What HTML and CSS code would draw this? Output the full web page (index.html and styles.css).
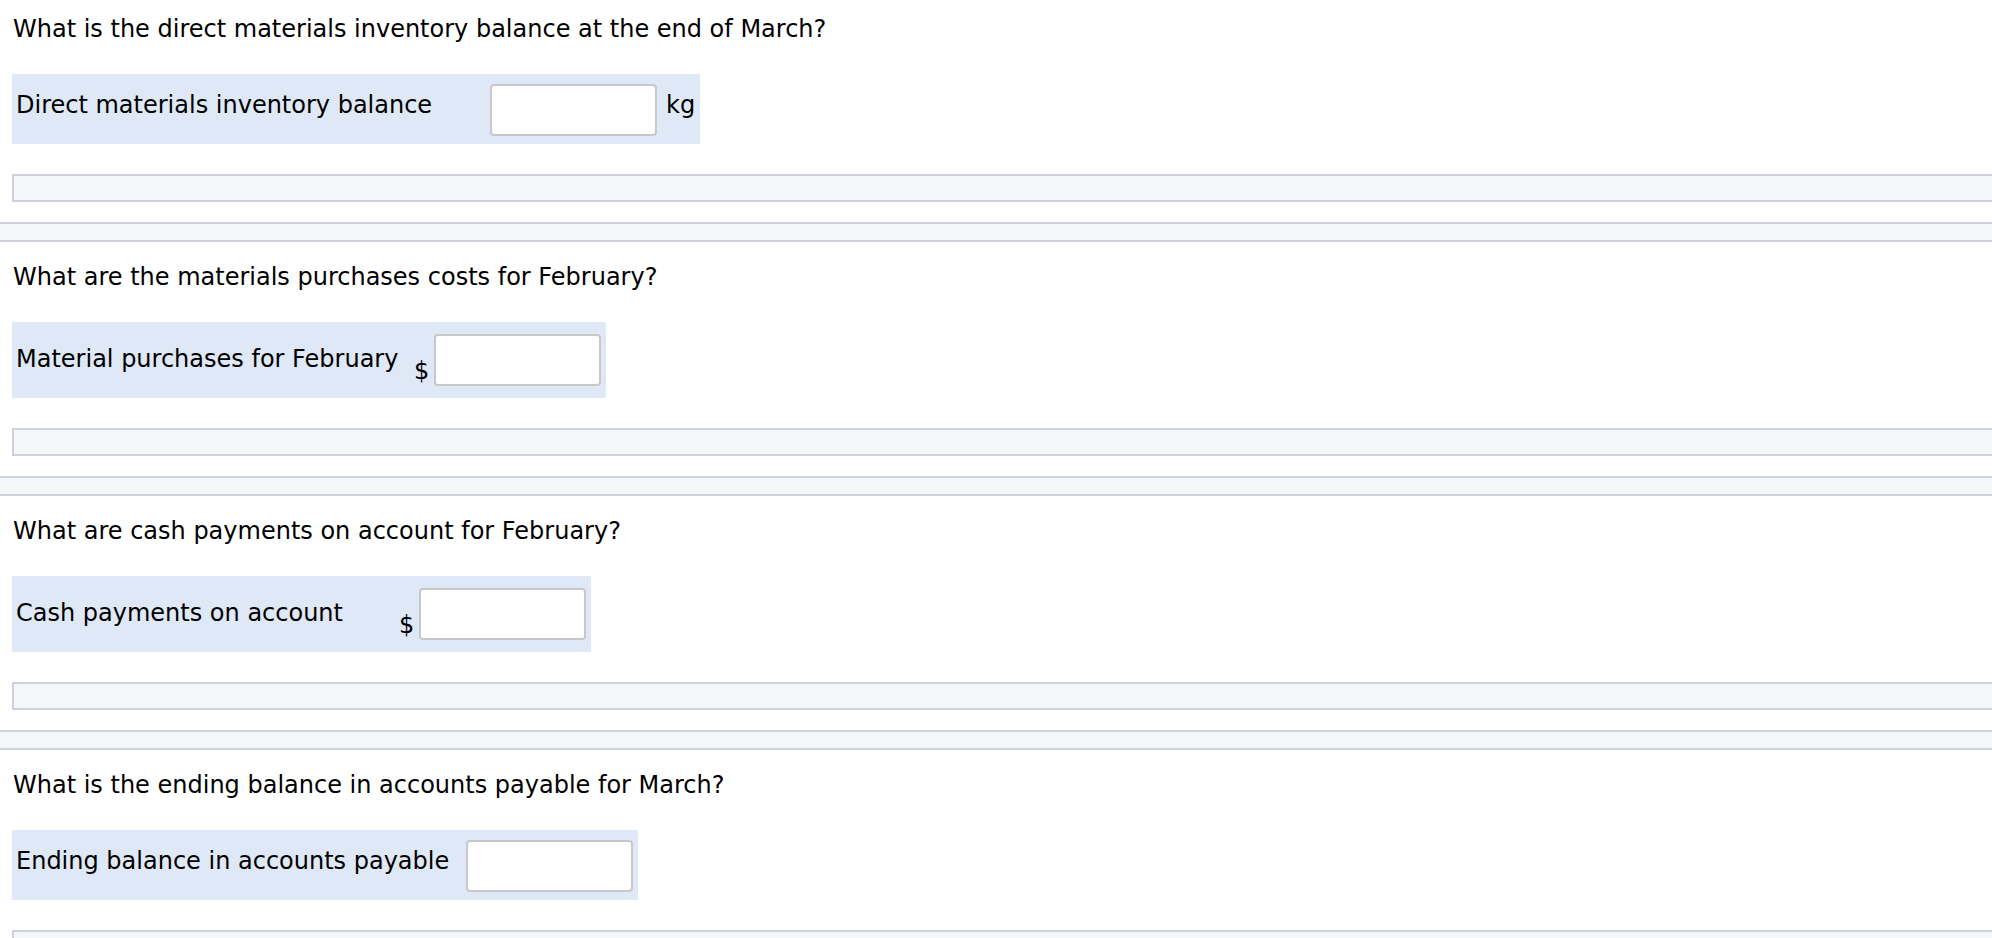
FILE: index.html
```html
<!DOCTYPE html>
<html lang="en">
<head>
<meta charset="utf-8">
<title>Questions</title>
<link rel="stylesheet" href="styles.css">
</head>
<body>
<div class="page">
  <section class="block first">
    <p class="question">What is the direct materials inventory balance at the end of March?</p>
    <div class="answer">
      <span class="label w-dm">Direct materials inventory balance</span>
      <input class="field" type="text" aria-label="Direct materials inventory balance">
      <span class="unit">kg</span>
    </div>
    <div class="feedback"></div>
  </section>
  <div class="separator"></div>

  <section class="block">
    <p class="question">What are the materials purchases costs for February?</p>
    <div class="answer money">
      <span class="label w-mp">Material purchases for February</span>
      <span class="currency">$</span>
      <input class="field" type="text" aria-label="Material purchases for February">
    </div>
    <div class="feedback"></div>
  </section>
  <div class="separator"></div>

  <section class="block">
    <p class="question">What are cash payments on account for February?</p>
    <div class="answer money">
      <span class="label w-cp">Cash payments on account</span>
      <span class="currency">$</span>
      <input class="field" type="text" aria-label="Cash payments on account">
    </div>
    <div class="feedback"></div>
  </section>
  <div class="separator"></div>

  <section class="block">
    <p class="question">What is the ending balance in accounts payable for March?</p>
    <div class="answer">
      <span class="label w-eb">Ending balance in accounts payable</span>
      <input class="field" type="text" aria-label="Ending balance in accounts payable">
    </div>
    <div class="feedback"></div>
  </section>
</div>
</body>
</html>
```

FILE: styles.css
```css
html, body {
  margin: 0;
  padding: 0;
  overflow: hidden;
  background: #ffffff;
}

body {
  font-family: Verdana, "DejaVu Sans", sans-serif;
  font-size: 24px;
  color: #000000;
}

.page {
  display: flex;
  flex-direction: column;
}

.block {
  padding-top: 20px;
}

.block.first {
  padding-top: 14px;
}

.question {
  margin: 0 0 30px 13px;
  line-height: 30px;
  white-space: nowrap;
}

.answer {
  display: flex;
  align-items: flex-start;
  width: fit-content;
  margin-left: 12px;
  padding: 10px 5px 8px 4px;
  background: #dfe8f7;
}

.answer.money {
  padding-top: 12px;
  padding-bottom: 12px;
}

.label {
  line-height: 30px;
  margin-top: 6px;
  white-space: nowrap;
}

.answer.money .label {
  margin-top: 10px;
}

.w-dm { width: 474px; }
.w-mp { width: 398px; }
.w-cp { width: 383px; }
.w-eb { width: 450px; }

.currency {
  align-self: flex-end;
  width: 20px;
  line-height: 30px;
}

.field {
  box-sizing: border-box;
  width: 167px;
  height: 52px;
  margin: 0;
  padding: 0 8px;
  border: 2px solid #c8c8c8;
  border-radius: 4px;
  background: #ffffff;
  font: inherit;
  outline: none;
}

.unit {
  margin-left: 9px;
  margin-top: 6px;
  line-height: 30px;
}

.feedback {
  box-sizing: border-box;
  height: 28px;
  margin: 30px -24px 0 12px;
  background: #f6f7f9;
  border: 2px solid #ccd1db;
}

.separator {
  box-sizing: border-box;
  height: 20px;
  margin-top: 20px;
  background: #f6f7f9;
  border-top: 2px solid #ccd1db;
  border-bottom: 2px solid #ccd1db;
}
```
